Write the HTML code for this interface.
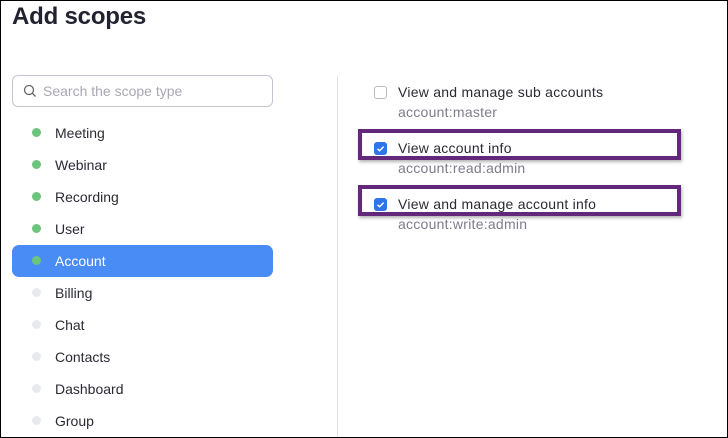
<!DOCTYPE html>
<html><head><style>
*{margin:0;padding:0;box-sizing:border-box}
body{width:728px;height:438px;overflow:hidden;background:#fff;font-family:"Liberation Sans",sans-serif;position:relative}
.frame{position:absolute;left:0;top:0;width:728px;height:438px;border:1px solid #000}
h1{position:absolute;left:12px;top:3px;font-size:24px;font-weight:bold;color:#222230;letter-spacing:-0.2px}
.search{position:absolute;left:12px;top:75px;width:261px;height:32px;border:1px solid #c5c5d0;border-radius:6px;font-size:14px;color:#a8a8b5;padding:7px 0 0 30px}
.search svg{position:absolute;left:10px;top:8px}
.item{position:absolute;left:12px;width:261px;height:32px;border-radius:7px;font-size:14px;color:#2a2a35;padding:8px 0 0 43px}
.item i{position:absolute;left:20px;top:11px;width:9px;height:9px;border-radius:50%;background:#e8e8ef}
.item.g i{background:#6cc57c}
.item.a{background:#4a8cf5;color:#fff}
.div{position:absolute;left:337px;top:75px;width:1px;height:362px;background:#e2e2ea}
.opt{position:absolute;left:374px;font-size:14px;color:#2a2a35;letter-spacing:0.25px}
.opt .cb{position:absolute;left:0;top:2px;width:13px;height:13px;border:1px solid #b8b8c8;border-radius:3px}
.opt .cb.on{background:#2f74e8;border-color:#2f74e8}
.opt .t{position:absolute;left:24px;top:0;white-space:nowrap}
.opt .s{position:absolute;left:24px;top:20px;color:#7d7d8c;white-space:nowrap}
.box{position:absolute;left:358px;width:323px;height:31px;border:4px solid #63287a;box-shadow:1px 2px 3px rgba(0,0,0,.3)}
</style></head><body>
<h1>Add scopes</h1>
<div class="search"><svg width="14" height="14" viewBox="0 0 14 14"><circle cx="6" cy="6" r="4.5" fill="none" stroke="#666" stroke-width="1.3"/><path d="M9.3 9.3L12.5 12.5" stroke="#666" stroke-width="1.3"/></svg>Search the scope type</div>
<div class="item g" style="top:117px"><i></i>Meeting</div>
<div class="item g" style="top:149px"><i></i>Webinar</div>
<div class="item g" style="top:181px"><i></i>Recording</div>
<div class="item g" style="top:213px"><i></i>User</div>
<div class="item g a" style="top:245px"><i></i>Account</div>
<div class="item" style="top:277px"><i></i>Billing</div>
<div class="item" style="top:309px"><i></i>Chat</div>
<div class="item" style="top:341px"><i></i>Contacts</div>
<div class="item" style="top:373px"><i></i>Dashboard</div>
<div class="item" style="top:405px"><i></i>Group</div>
<div class="div"></div>
<div class="opt" style="top:84px"><div class="cb"></div><div class="t">View and manage sub accounts</div><div class="s">account:master</div></div>
<div class="opt" style="top:140px"><div class="cb on"><svg width="13" height="13" viewBox="0 0 13 13" style="position:absolute;left:-1px;top:-1px"><path d="M3.5 6.8L5.6 8.8L9.6 4.6" fill="none" stroke="#fff" stroke-width="1.4"/></svg></div><div class="t">View account info</div><div class="s">account:read:admin</div></div>
<div class="opt" style="top:196px"><div class="cb on"><svg width="13" height="13" viewBox="0 0 13 13" style="position:absolute;left:-1px;top:-1px"><path d="M3.5 6.8L5.6 8.8L9.6 4.6" fill="none" stroke="#fff" stroke-width="1.4"/></svg></div><div class="t">View and manage account info</div><div class="s">account:write:admin</div></div>
<div class="box" style="top:129px"></div>
<div class="box" style="top:185px"></div>
<div class="frame"></div>
</body></html>
